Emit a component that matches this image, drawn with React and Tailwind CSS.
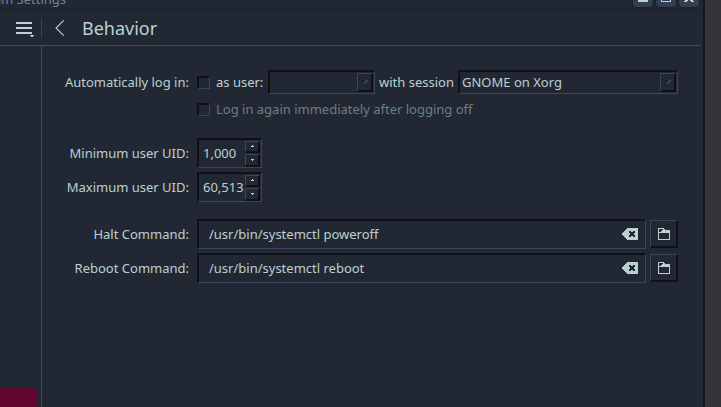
import React, { useState } from 'react';

const sunken = 'border-t-2 border-l-2 border-r border-b border-t-[#0f1116] border-l-[#0f1116] border-r-[#3b465a] border-b-[#3b465a]';
const raised = 'border-t border-l border-r-2 border-b-2 border-t-[#3b465a] border-l-[#3b465a] border-r-[#0f1116] border-b-[#0f1116]';

const WindowButton = ({ children }) => (
    <button className="flex h-[7px] w-5 items-start justify-center overflow-hidden rounded-b-sm bg-[#343e51] shadow-[0_0_0_1px_#1b2029]">
        {children}
    </button>
);

const TitleBar = () => (
    <div className="flex h-[10px] shrink-0 items-start justify-between overflow-hidden border-b border-[#1b2029] pr-[2px]">
        <span className="-mt-[10px] -ml-[31px] text-[13px] leading-[18px] text-[#6d82a3]">System Settings</span>
        <div className="flex gap-[3px]">
            <WindowButton>
                <span className="h-[2px] w-[10px] bg-[#bcd0d2]" />
            </WindowButton>
            <WindowButton>
                <span className="h-[2px] w-[10px] border-x border-b border-[#bcd0d2]" />
            </WindowButton>
            <WindowButton>
                <svg width="10" height="2" viewBox="0 0 10 2" fill="#bcd0d2" shapeRendering="crispEdges">
                    <path d="M1 0h3v1H3v1H0V1h1zM6 0h3v1h1v1H7V1H6z" />
                </svg>
            </WindowButton>
        </div>
    </div>
);

const Header = () => (
    <div className="flex h-9 shrink-0 items-center border-b border-[#444952]">
        <button className="ml-4 flex h-4 w-[18px]">
            <svg className="shrink-0 overflow-visible" width="18" height="18" viewBox="0 0 18 18" fill="#bcd0d2" shapeRendering="crispEdges">
                <path d="M0 2h16v2H0zM0 7h16v2H0zM0 12h16v2H0z" />
                <path d="M14 15h4v1h-1v1h-2v-1h-1z" />
            </svg>
        </button>
        <span className="ml-[7px] h-5 w-px bg-[#3b4049]" />
        <button className="ml-[13px]">
            <svg width="10" height="16" viewBox="0 0 10 16" fill="none" stroke="#bcd0d2" strokeWidth="1.1">
                <path d="M8.8 0.4L1 8l7.800 7.600" />
            </svg>
        </button>
        <h1 className="ml-[17px] text-[18px] leading-6">Behavior</h1>
    </div>
);

const Row = ({ label, className, children }) => (
    <div className={`flex items-center ${className}`}>
        <span className="mr-2 w-[147px] shrink-0 text-right">{label}</span>
        {children}
    </div>
);

const CheckBox = ({ checked, disabled, onChange }) => (
    <button
        onClick={onChange}
        disabled={disabled}
        className={`h-[13px] w-[13px] shrink-0 ${sunken} ${checked ? 'bg-[#bcd0d2]' : ''}`}
    />
);

const ComboBox = ({ value, className }) => (
    <div className={`flex h-6 shrink-0 items-center justify-between pl-[2px] ${sunken} ${className}`}>
        <span className="pb-[2px]">{value}</span>
        <span className={`mr-px flex h-[19px] w-4 items-center justify-center ${raised}`}>
            <svg width="8" height="6" viewBox="0 0 8 6" fill="none">
                <path d="M1 1l3 3" stroke="#151920" strokeWidth="1.200" />
                <path d="M3 4.500L7 1" stroke="#3b465a" strokeWidth="2" />
            </svg>
        </span>
    </div>
);

const SpinBox = ({ initial }) => {
    const [value, setValue] = useState(initial);

    return (
        <div className={`flex h-[30px] w-[65px] items-center justify-between pl-1 ${sunken}`}>
            <span className="w-[41px] pb-[2px]">{value.toLocaleString('en-US')}</span>
            <div className="mr-px flex flex-col gap-px">
                <button onClick={() => setValue(value + 1)} className={`flex h-3 w-[15px] items-center justify-center ${raised}`}>
                    <svg width="3" height="2" viewBox="0 0 3 2" fill="#bcd0d2" shapeRendering="crispEdges">
                        <path d="M1 0h1v1h1v1H0V1h1z" />
                    </svg>
                </button>
                <button onClick={() => setValue(value - 1)} className={`flex h-[13px] w-[15px] items-center justify-center ${raised}`}>
                    <svg width="3" height="2" viewBox="0 0 3 2" fill="#bcd0d2" shapeRendering="crispEdges">
                        <path d="M0 0h3v1H2v1H1V1H0z" />
                    </svg>
                </button>
            </div>
        </div>
    );
};

const CommandField = ({ initial }) => {
    const [value, setValue] = useState(initial);

    return (
        <>
            <div className={`flex h-[30px] w-[449px] items-center justify-between pr-[7px] pb-[2px] pl-[10px] ${sunken}`}>
                <span>{value}</span>
                <button onClick={() => setValue('')}>
                    <svg width="16" height="12" viewBox="0 0 16 12" shapeRendering="crispEdges">
                        <path d="M5 0h11v12H5v-1H4v-1H3V9H2V8H1V7H0V5h1V4h1V3h1V2h1V1h1z" fill="#bcd0d2" />
                        <path d="M7 3h2v1h2V3h2v2h-1v2h1v2h-2V8H9v1H7V7h1V5H7z" fill="#222833" />
                    </svg>
                </button>
            </div>
            <button className={`ml-1 flex h-7 w-7 items-center justify-center ${raised}`}>
                <svg width="12" height="12" viewBox="0 0 12 12" shapeRendering="crispEdges">
                    <path d="M0 0h6v1h1v1h5v10H0zM1 5v6h10V5z" fill="#bcd0d2" fillRule="evenodd" />
                    <path d="M1 1h4v1H4v1H3v1H1z" fill="#222833" />
                </svg>
            </button>
        </>
    );
};

const LoginForm = () => {
    const [autoLogin, setAutoLogin] = useState(false);

    return (
        <div className="flex flex-1 flex-col pt-6 text-[13px] leading-[18px]">
            <Row label="Automatically log in:" className="h-6">
                <CheckBox checked={autoLogin} onChange={() => setAutoLogin(!autoLogin)} />
                <span className="ml-[6px] w-[52px] whitespace-nowrap">as user:</span>
                <ComboBox value="" className="w-[107px]" />
                <span className="ml-1 w-[79px] whitespace-nowrap">with session</span>
                <ComboBox value="GNOME on Xorg" className="w-[220px]" />
            </Row>
            <Row className="mt-[5px] h-5">
                <CheckBox disabled={!autoLogin} />
                <span className="ml-[6px] text-[#6f7c82]">Log in again immediately after logging off</span>
            </Row>
            <Row label="Minimum user UID:" className="mt-[19px]">
                <SpinBox initial={1000} />
            </Row>
            <Row label="Maximum user UID:" className="mt-1">
                <SpinBox initial={60513} />
            </Row>
            <Row label="Halt Command:" className="mt-[17px]">
                <CommandField initial="/usr/bin/systemctl poweroff" />
            </Row>
            <Row label="Reboot Command:" className="mt-1">
                <CommandField initial="/usr/bin/systemctl reboot" />
            </Row>
        </div>
    );
};

const App = () => {
    return (
        <div className="flex h-[407px] w-[721px] overflow-hidden bg-[#353438] font-['Noto_Sans',sans-serif] text-[#bcd0d2]">
            <div className="flex w-[705px] flex-col border-r-2 border-[#13161c] bg-[#222833] pr-[2px]">
                <TitleBar />
                <Header />
                <div className="flex flex-1">
                    <div className="flex w-[42px] shrink-0 flex-col justify-end border-r border-[#444952]">
                        <div className="h-[19px] w-[37px] rounded-tr-[5px] bg-[#62082f]" />
                    </div>
                    <LoginForm />
                </div>
            </div>
        </div>
    );
};

export default App;
